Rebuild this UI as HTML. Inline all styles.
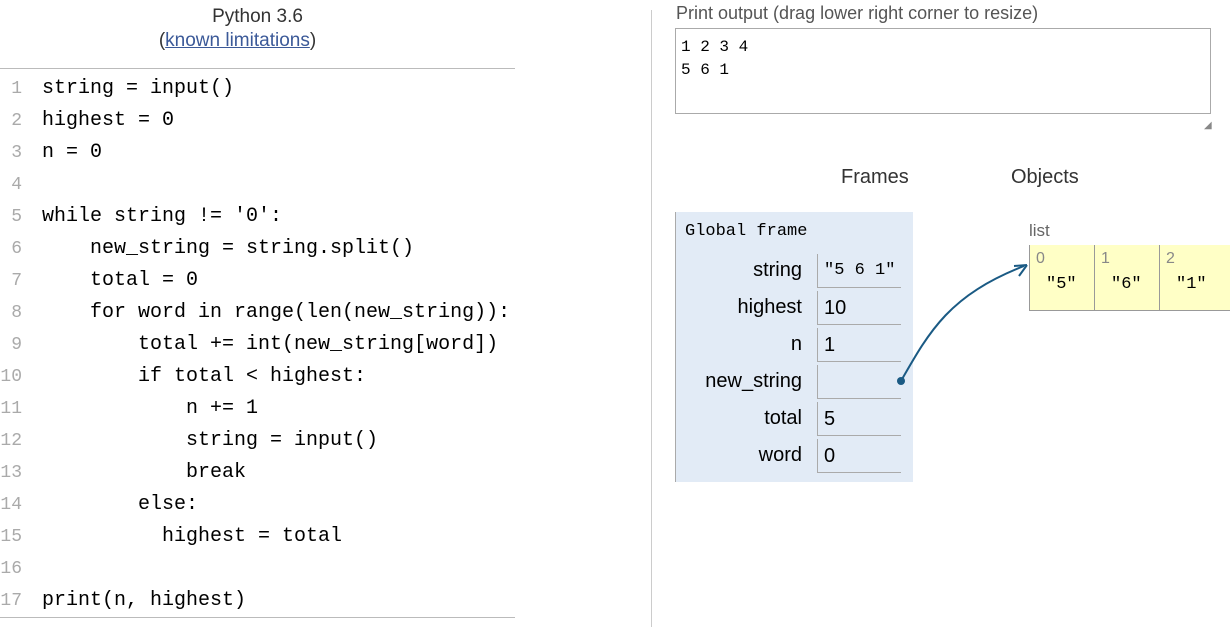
<!DOCTYPE html>
<html><head><style>
body{margin:0;width:1230px;height:627px;background:#fff;position:relative;overflow:hidden;font-family:"Liberation Sans",sans-serif;}
.a{position:absolute;white-space:pre;}
.ln{position:absolute;left:0;width:22px;text-align:right;color:#aaa;font-family:"Liberation Mono",monospace;font-size:18px;}
.cd{position:absolute;left:42px;font-family:"Liberation Mono",monospace;font-size:20px;color:#000;white-space:pre;}
.lbl{position:absolute;right:0;width:130px;text-align:right;font-size:20px;}
.row{position:absolute;left:0;width:237px;height:37px;}
.val{position:absolute;left:141px;width:84px;height:34px;border-left:1px solid #aaa;border-bottom:1px solid #aaa;font-size:20px;padding-left:6px;box-sizing:border-box;line-height:34px;}
.cell{position:absolute;top:245px;height:66px;width:65px;background:#ffffc6;border-left:1px solid #999;border-bottom:1px solid #999;box-sizing:border-box;}
.idx{position:absolute;left:6px;top:5px;color:#888;font-size:16px;}
.cv{position:absolute;left:16px;top:30px;font-family:"Liberation Mono",monospace;font-size:17px;}
</style></head><body>
<div class="a" style="left:0;width:515px;text-align:center;top:6px;font-size:19px;color:#333">Python 3.6</div>
<div class="a" style="left:0;width:475px;text-align:center;top:30px;font-size:19px;color:#333;padding-left:0">(<span style="color:#3b5998;text-decoration:underline">known limitations</span>)</div>
<div class="a" style="left:0;top:68px;width:515px;height:1px;background:#bbb"></div>
<div class="a" style="left:0;top:617px;width:515px;height:1px;background:#bbb"></div>
<div class="a" style="left:651px;top:10px;width:1px;height:617px;background:#ccc"></div>
<div id="code"></div>
<script>
var L=["string = input()","highest = 0","n = 0","","while string != '0':","    new_string = string.split()","    total = 0","    for word in range(len(new_string)):","        total += int(new_string[word])","        if total < highest:","            n += 1","            string = input()","            break","        else:","          highest = total","","print(n, highest)"];
var h="";for(var i=0;i<L.length;i++){var y=77+32*i;h+='<div class="ln" style="top:'+(y+2)+'px">'+(i+1)+'</div><div class="cd" style="top:'+y+'px">'+L[i].replace(/</g,"&lt;")+'</div>';}
document.getElementById("code").innerHTML=h;
</script>
<div class="a" style="left:676px;top:3px;font-size:18px;color:#555">Print output (drag lower right corner to resize)</div>
<div class="a" style="left:675px;top:28px;width:536px;height:86px;border:1px solid #aaa;box-sizing:border-box;font-family:'Liberation Mono',monospace;font-size:16px;padding:7px 5px;line-height:23px">1 2 3 4
5 6 1</div>
<div class="a" style="left:1204px;top:120px;font-size:10px;color:#888">◢</div>
<div class="a" style="left:841px;top:166px;font-size:20px;color:#333">Frames</div>
<div class="a" style="left:1011px;top:166px;font-size:20px;color:#333">Objects</div>
<div class="a" style="left:675px;top:212px;width:238px;height:270px;background:#e2ebf6;border-left:1px solid #aaa;box-sizing:border-box">
<div class="a" style="left:9px;top:10px;font-family:'Liberation Mono',monospace;font-size:17px">Global frame</div>
<div class="row" style="top:42px"><div class="lbl" style="right:111px;top:5px">string</div><div class="val" style="font-family:'Liberation Mono',monospace;font-size:17px">"5 6 1"</div></div>
<div class="row" style="top:79px"><div class="lbl" style="right:111px;top:5px">highest</div><div class="val">10</div></div>
<div class="row" style="top:116px"><div class="lbl" style="right:111px;top:5px">n</div><div class="val">1</div></div>
<div class="row" style="top:153px"><div class="lbl" style="right:111px;top:5px">new_string</div><div class="val"></div></div>
<div class="row" style="top:190px"><div class="lbl" style="right:111px;top:5px">total</div><div class="val">5</div></div>
<div class="row" style="top:227px"><div class="lbl" style="right:111px;top:5px">word</div><div class="val">0</div></div>
</div>
<div class="a" style="left:1029px;top:221px;font-size:17px;color:#666">list</div>
<div class="cell" style="left:1029px"><div class="idx">0</div><div class="cv">"5"</div></div>
<div class="cell" style="left:1094px"><div class="idx">1</div><div class="cv">"6"</div></div>
<div class="cell" style="left:1159px;width:71px"><div class="idx">2</div><div class="cv">"1"</div></div>
<svg class="a" style="left:0;top:0" width="1230" height="627">
<path d="M901,381 C930,330 950,295 1024,266" fill="none" stroke="#1a5a84" stroke-width="2"/>
<path d="M1027,265 L1014,266 M1027,265 L1019,276" stroke="#1a5a84" stroke-width="2" fill="none"/>
<circle cx="901" cy="381" r="4" fill="#1a5a84"/>
</svg>
</body></html>
